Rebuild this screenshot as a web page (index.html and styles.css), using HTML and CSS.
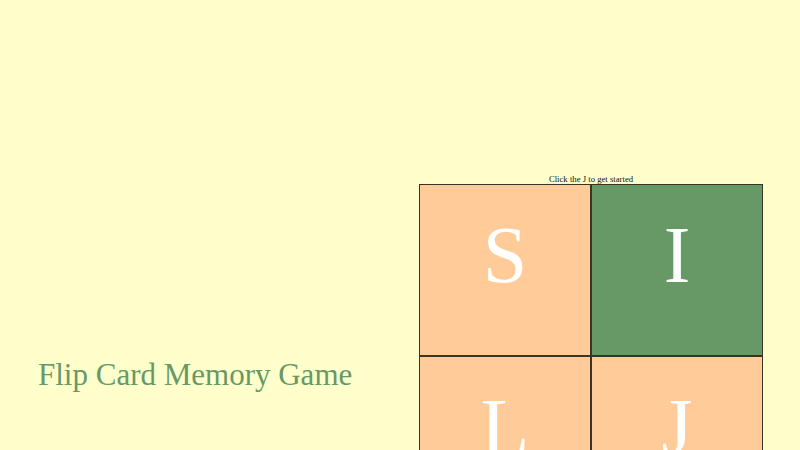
FILE: index.html
```html
<!DOCTYPE html>
<html>
<head>
<meta charset="utf-8">
<title>Flip Card Memory Game</title>
<link rel="stylesheet" href="styles.css">
</head>
<body>
<div class="page">
  <div class="intro">
    <h1 class="title">Flip Card Memory Game</h1>
  </div>
  <div class="game">
    <p class="caption">Click the J to get started</p>
    <div class="board">
      <div class="card peach">S</div>
      <div class="card green">I</div>
      <div class="card peach">L</div>
      <div class="card peach">J</div>
    </div>
  </div>
</div>
</body>
</html>
```
FILE: styles.css
```css
html, body {
  margin: 0;
  padding: 0;
  background: #ffffcc;
}
body {
  height: 450px;
  overflow: hidden;
  font-family: "Liberation Serif", "Times New Roman", serif;
}
.page {
  display: flex;
  align-items: flex-start;
}
.intro {
  width: 419px;
  padding-top: 357px;
  box-sizing: border-box;
  padding-left: 38px;
}
.title {
  margin: 0;
  font-size: 31px;
  font-weight: normal;
  line-height: 36px;
  color: #669966;
  white-space: nowrap;
}
.game {
  padding-top: 174px;
  width: 344px;
}
.caption {
  margin: 0;
  font-size: 8.7px;
  line-height: 10px;
  text-align: center;
  color: #111;
}
.board {
  display: grid;
  grid-template-columns: 172px 172px;
  grid-auto-rows: 172px;
}
.card {
  box-sizing: border-box;
  border: 1px solid #3a3424;
  color: #fff;
  font-size: 80px;
  text-align: center;
  padding-top: 25px;
  line-height: normal;
}
.peach { background: #ffcc99; }
.green { background: #669966; }
```
